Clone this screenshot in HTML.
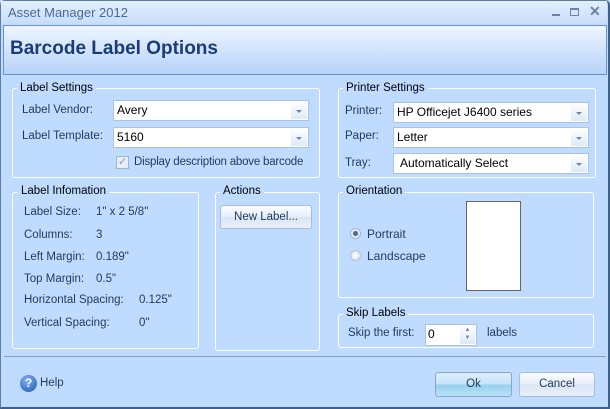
<!DOCTYPE html>
<html><head><style>
*{box-sizing:border-box;margin:0;padding:0}
body{width:610px;height:409px;overflow:hidden;background:#bfdbff;font-family:"Liberation Sans",Tahoma,sans-serif;font-size:11.5px;color:#1e395b;position:relative}
.a{position:absolute}
.win{left:0;top:0;width:610px;height:409px;border:1px solid #5b7da8;border-radius:5px 5px 0 0;border-right:2px solid #3f5e88;border-bottom:2px solid #3f5e88}
.tb{left:1px;top:1px;width:606px;height:23px;background:linear-gradient(#e3efff,#c7ddf9)}
.hdr{left:3px;top:25px;width:604px;height:50px;border:1px solid #6c93c6;background:linear-gradient(#eef5ff,#b6d3fa)}
.grp{border:1px solid #fff;border-radius:3px}
.lg{background:#bfdbff;padding:0 3px;color:#000;font-size:11.5px;line-height:13px}
.cb{background:#fff;border:1px solid #a9c3e4;height:21px;line-height:19px;padding-left:3px;color:#000;font-size:12px}
.cb i{position:absolute;right:1px;top:1px;width:16px;height:17px;background:linear-gradient(#fff,#dde9f7)}
.cb i:after{content:"";position:absolute;left:5px;top:8px;border:3px solid transparent;border-top:3px solid #6d87a8;border-bottom:0}
.lbl{color:#1e395b;font-size:11.5px}
.btn{border:1px solid #a6bcd8;border-radius:3px;background:linear-gradient(#fbfdff 0%,#e6eef9 50%,#d8e4f4 51%,#eaf1fb 100%);text-align:center;color:#1e395b;font-size:11.5px}
</style></head><body>
<div class="a win"></div>
<div class="a tb"></div>
<div class="a" style="left:8px;top:5px;color:#4a6a94;font-size:13px">Asset Manager 2012</div>
<div class="a" style="left:552px;top:14px;width:8px;height:2px;background:#6b84a6"></div>
<div class="a" style="left:570px;top:8px;width:9px;height:8px;border:1px solid #6b84a6;border-top-width:2px"></div>
<div class="a" style="left:589px;top:3px;color:#6b84a6;font-size:14px;font-weight:bold">✕</div>
<div class="a hdr"></div>
<div class="a" style="left:10px;top:38px;font-size:19px;font-weight:bold;color:#1b3c78">Barcode Label Options</div>

<div class="a grp" style="left:12px;top:88px;width:308px;height:90px"></div>
<div class="a lg" style="left:17px;top:82px">Label Settings</div>
<div class="a lbl" style="left:22px;top:104px">Label Vendor:</div>
<div class="a cb" style="left:113px;top:100px;width:196px">Avery<i></i></div>
<div class="a lbl" style="left:22px;top:130px">Label Template:</div>
<div class="a cb" style="left:113px;top:127px;width:196px">5160<i></i></div>
<div class="a" style="left:116px;top:156px;width:13px;height:13px;border:1px solid #9fb3cc;background:#e8eef6;color:#8a9bb0;font-size:11px;line-height:11px;text-align:center">✓</div>
<div class="a lbl" style="left:134px;top:156px;letter-spacing:-0.2px">Display description above barcode</div>

<div class="a grp" style="left:338px;top:88px;width:258px;height:90px"></div>
<div class="a lg" style="left:343px;top:82px">Printer Settings</div>
<div class="a lbl" style="left:345px;top:105px">Printer:</div>
<div class="a cb" style="left:393px;top:102px;width:196px">HP Officejet J6400 series<i></i></div>
<div class="a lbl" style="left:345px;top:130px">Paper:</div>
<div class="a cb" style="left:393px;top:127px;width:196px">Letter<i></i></div>
<div class="a lbl" style="left:345px;top:157px">Tray:</div>
<div class="a cb" style="left:393px;top:153px;width:196px;padding-left:6px">Automatically Select<i></i></div>

<div class="a grp" style="left:12px;top:192px;width:187px;height:157px"></div>
<div class="a lg" style="left:18px;top:185px">Label Infomation</div>
<div class="a lbl" style="left:24px;top:206px">Label Size:</div><div class="a lbl" style="left:96px;top:206px">1" x 2 5/8"</div>
<div class="a lbl" style="left:24px;top:229px">Columns:</div><div class="a lbl" style="left:96px;top:229px">3</div>
<div class="a lbl" style="left:24px;top:251px">Left Margin:</div><div class="a lbl" style="left:96px;top:251px">0.189"</div>
<div class="a lbl" style="left:24px;top:273px">Top Margin:</div><div class="a lbl" style="left:96px;top:273px">0.5"</div>
<div class="a lbl" style="left:24px;top:294px">Horizontal Spacing:</div><div class="a lbl" style="left:139px;top:294px">0.125"</div>
<div class="a lbl" style="left:24px;top:317px">Vertical Spacing:</div><div class="a lbl" style="left:139px;top:317px">0"</div>

<div class="a grp" style="left:215px;top:192px;width:105px;height:159px"></div>
<div class="a lg" style="left:220px;top:185px">Actions</div>
<div class="a btn" style="left:220px;top:205px;width:92px;height:24px;line-height:22px">New Label...</div>

<div class="a grp" style="left:338px;top:192px;width:256px;height:106px"></div>
<div class="a lg" style="left:343px;top:185px">Orientation</div>
<div class="a" style="left:350px;top:228px;width:11px;height:11px;border-radius:50%;border:1px solid #a9b7c8;background:radial-gradient(#4d6a99 35%,#e8eef5 45%)"></div>
<div class="a lbl" style="left:367px;top:227px;font-size:12px">Portrait</div>
<div class="a" style="left:350px;top:250px;width:11px;height:11px;border-radius:50%;border:1px solid #b5c2d1;background:radial-gradient(#fff,#d0d8e2)"></div>
<div class="a lbl" style="left:367px;top:249px;font-size:12px">Landscape</div>
<div class="a" style="left:466px;top:201px;width:55px;height:90px;background:#fff;border:1px solid #666"></div>

<div class="a grp" style="left:338px;top:314px;width:256px;height:34px"></div>
<div class="a lg" style="left:343px;top:307px">Skip Labels</div>
<div class="a lbl" style="left:348px;top:327px">Skip the first:</div>
<div class="a" style="left:425px;top:324px;width:52px;height:22px;background:#fff;border:1px solid #a9c3e4;color:#000;padding-left:2px;line-height:19px;font-size:12px">0</div>
<div class="a" style="left:460px;top:326px;width:15px;height:18px;background:linear-gradient(#fff,#dde9f7);color:#6d87a8;font-size:6px;line-height:8px;text-align:center">▲<br>▼</div>
<div class="a lbl" style="left:487px;top:327px">labels</div>

<div class="a" style="left:4px;top:356px;width:602px;height:1px;background:#7fa1cc"></div>
<div class="a" style="left:20px;top:375px;width:17px;height:17px;border-radius:50%;background:radial-gradient(circle at 40% 30%,#7fb0f0,#1d57b5);color:#fff;font-weight:bold;font-size:12px;line-height:17px;text-align:center">?</div>
<div class="a lbl" style="left:40px;top:377px">Help</div>
<div class="a" style="left:435px;top:372px;width:77px;height:25px;border:1px solid #8aa6c8;border-radius:3px;background:linear-gradient(#ddeffb 0%,#c6e4f8 48%,#96d0ee 52%,#b8e2f6 100%);text-align:center;line-height:23px;color:#1e395b">Ok</div>
<div class="a btn" style="left:519px;top:372px;width:76px;height:25px;line-height:23px">Cancel</div>
</body></html>
